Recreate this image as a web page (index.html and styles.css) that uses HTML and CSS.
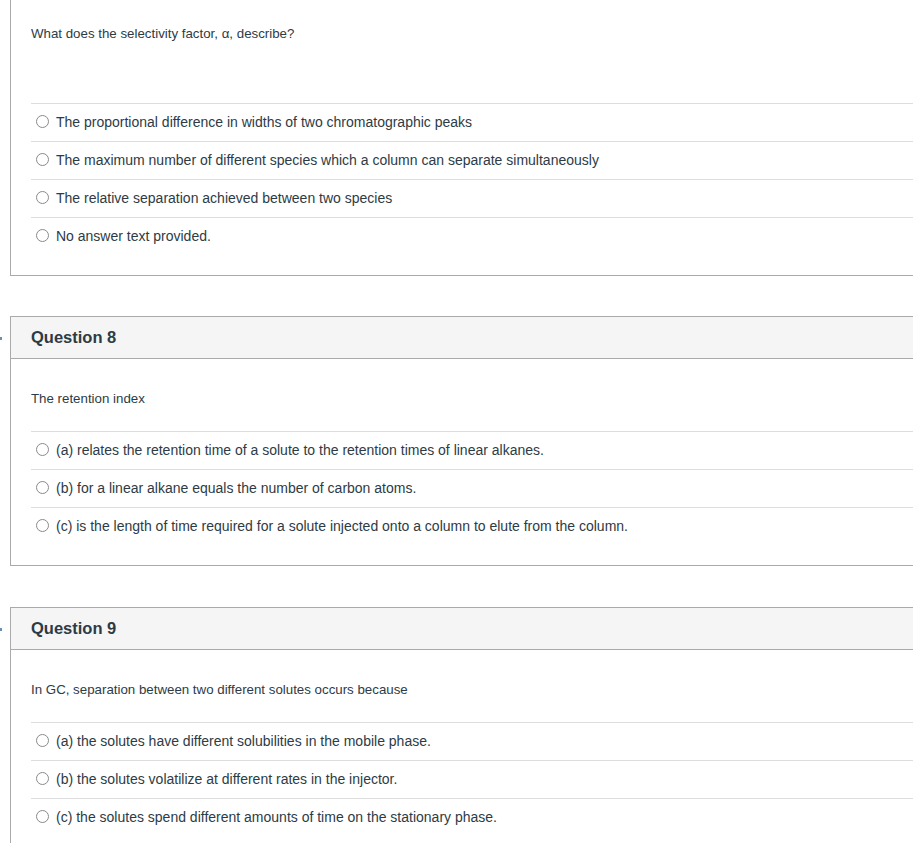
FILE: index.html
```html
<html>
	<head>
		<meta charset="utf-8" />
		<title>quiz</title>
		<link rel="stylesheet" href="styles.css">
	</head>
	<body>
		<div class="quiz">

			<div class="question question-first">
				<div class="question-text question-text-tall">What does the selectivity factor, α, describe?</div>
				<div class="answers">
					<label class="answer"><span class="radio"></span>The proportional difference in widths of two chromatographic peaks</label>
					<label class="answer"><span class="radio"></span>The maximum number of different species which a column can separate simultaneously</label>
					<label class="answer"><span class="radio"></span>The relative separation achieved between two species</label>
					<label class="answer"><span class="radio"></span>No answer text provided.</label>
				</div>
			</div>

			<div class="question">
				<div class="question-header">
					<span class="question-name">Question 8</span>
				</div>
				<div class="question-text">The retention index</div>
				<div class="answers">
					<label class="answer"><span class="radio"></span>(a) relates the retention time of a solute to the retention times of linear alkanes.</label>
					<label class="answer"><span class="radio"></span>(b) for a linear alkane equals the number of carbon atoms.</label>
					<label class="answer"><span class="radio"></span>(c) is the length of time required for a solute injected onto a column to elute from the column.</label>
				</div>
			</div>

			<div class="question question-last">
				<div class="question-header">
					<span class="question-name">Question 9</span>
				</div>
				<div class="question-text">In GC, separation between two different solutes occurs because</div>
				<div class="answers">
					<label class="answer"><span class="radio"></span>(a) the solutes have different solubilities in the mobile phase.</label>
					<label class="answer"><span class="radio"></span>(b) the solutes volatilize at different rates in the injector.</label>
					<label class="answer"><span class="radio"></span>(c) the solutes spend different amounts of time on the stationary phase.</label>
				</div>
			</div>

		</div>
	</body>
</html>
```

FILE: styles.css
```css
html{
	overflow: hidden;
}
body{
	margin: 0;
	background: #ffffff;
	color: #2d3b45;
	font-family: "Liberation Sans", Arial, sans-serif;
}
.quiz{
	padding-left: 10px;
}
.question{
	width: 1000px;
	border: 1px solid #aaaaaa;
	margin-top: 40px;
	padding-bottom: 20px;
}
/* the first card is scrolled half out of view, only its body shows */
.question-first{
	margin-top: -6px;
	border-top: none;
}
.question-last{
	margin-top: 41px;
}
.question-header{
	position: relative;
	height: 41px;
	line-height: 41px;
	padding-left: 20px;
	background: #f5f5f5;
	border-bottom: 1px solid #aaaaaa;
}
/* little marker left of the card */
.question-header:before{
	content: "";
	position: absolute;
	left: -11px;
	top: 20px;
	width: 2px;
	height: 3px;
	background: #6a8fb5;
}
.question-name{
	font-size: 16.5px;
	font-weight: bold;
}
.question-text{
	font-size: 13.3px;
	line-height: 16px;
	padding: 32px 20px 0 20px;
	margin-bottom: 24px;
}
.question-text-tall{
	margin-bottom: 61px;
}
.answers{
	margin-left: 20px;
}
.answer{
	display: flex;
	align-items: center;
	height: 35px;
	padding-bottom: 2px;
	border-top: 1px solid #dddddd;
	font-size: 14px;
}
.radio{
	width: 11px;
	height: 11px;
	border: 1px solid #8a8a8a;
	border-radius: 50%;
	margin-left: 5px;
	margin-right: 7px;
	background: #ffffff;
}
```
